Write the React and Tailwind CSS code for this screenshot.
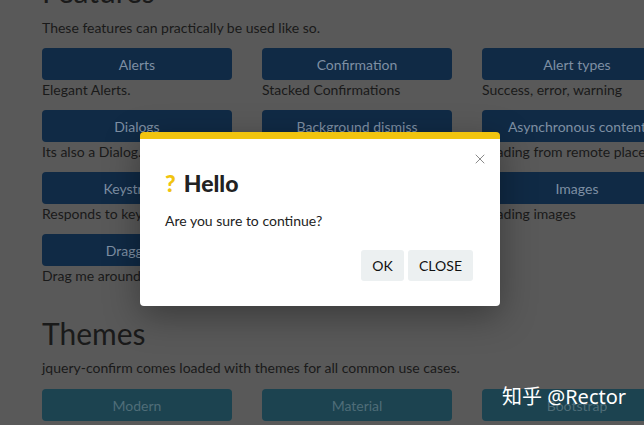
import React from 'react';
import { X } from 'lucide-react';

const features = [
  ['Alerts', 'Elegant Alerts.'],
  ['Confirmation', 'Stacked Confirmations'],
  ['Alert types', 'Success, error, warning'],
  ['Dialogs', 'Its also a Dialog.'],
  ['Background dismiss', 'Controlled backgroundDismiss'],
  ['Asynchronous content', 'Loading from remote places'],
  ['Keystrokes', 'Responds to keystrokes'],
  ['Auto-close', 'Timed actions'],
  ['Images', 'Loading images'],
  ['Draggable', 'Drag me around'],
];

const themes = ['Modern', 'Material', 'Bootstrap'];

export default function App() {
  return (
    <div className="relative w-[644px] h-[425px] overflow-hidden bg-[#595959]" style={{ fontFamily: 'Lato, "Noto Sans", sans-serif' }}>
      {/* page behind the overlay */}
      <div className="pl-[42px] -mt-[27px] w-[720px]">
        <h2 className="text-[30px] leading-[36px] text-[#1a1a1a]">Features</h2>
        <p className="mt-[10px] text-[14px] leading-[18px] text-[#1a1a1a]">These features can practically be used like so.</p>

        <div className="mt-[11px] grid grid-cols-[190px_190px_190px] gap-x-[30px] gap-y-[10px]">
          {features.map(([label, desc]) => (
            <div key={label}>
              <div className="h-[32px] rounded-[4px] bg-[#102a45] flex items-center justify-center text-[14px] text-[#7e8fa3] whitespace-nowrap">
                {label}
              </div>
              <div className="h-[20px] leading-[20px] text-[14px] text-[#1a1a1a] whitespace-nowrap">{desc}</div>
            </div>
          ))}
        </div>

        <h2 className="mt-[29px] text-[30px] leading-[36px] text-[#1a1a1a]">Themes</h2>
        <p className="mt-[8px] text-[14px] leading-[18px] text-[#1a1a1a]">jquery-confirm comes loaded with themes for all common use cases.</p>
        <div className="mt-[12px] grid grid-cols-[190px_190px_190px] gap-x-[30px]">
          {themes.map((t) => (
            <div key={t} className="h-[32px] rounded-[4px] bg-[#1c4350] flex items-center justify-center text-[14px] text-[#4f6d78]">
              {t}
            </div>
          ))}
        </div>
      </div>

      {/* dialog */}
      <div className="absolute left-[140px] top-[132px] w-[360px] bg-white rounded-[4px] border-t-[7px] border-[#f1c40f] shadow-[0_10px_35px_rgba(0,0,0,0.35)] px-[25px] pb-[25px]">
        <button className="absolute right-[12px] top-[12px] text-[#8a8a8a]">
          <X className="w-[16px] h-[16px]" strokeWidth={1.5} />
        </button>
        <div className="pt-[30px] flex items-center gap-[8px] text-[23px] leading-[28px] font-black text-[#222]">
          <span className="text-[#f1c40f]">?</span>
          <span>Hello</span>
        </div>
        <p className="mt-[14px] text-[14px] leading-[20px] text-[#222]">Are you sure to continue?</p>
        <div className="mt-[19px] flex justify-end gap-[4px] pr-[2px]">
          <button className="h-[31px] w-[43px] rounded-[3px] bg-[#ecf0f1] text-[14px] text-[#111]">OK</button>
          <button className="h-[31px] w-[65px] rounded-[3px] bg-[#ecf0f1] text-[14px] text-[#111]">CLOSE</button>
        </div>
      </div>

      {/* watermark */}
      <div className="absolute left-[502px] top-[383px] text-[20px] leading-[28px] text-white whitespace-nowrap" style={{ fontFamily: '"Noto Sans", "Noto Sans CJK SC", sans-serif' }}>
        知乎 @Rector
      </div>
    </div>
  );
}
